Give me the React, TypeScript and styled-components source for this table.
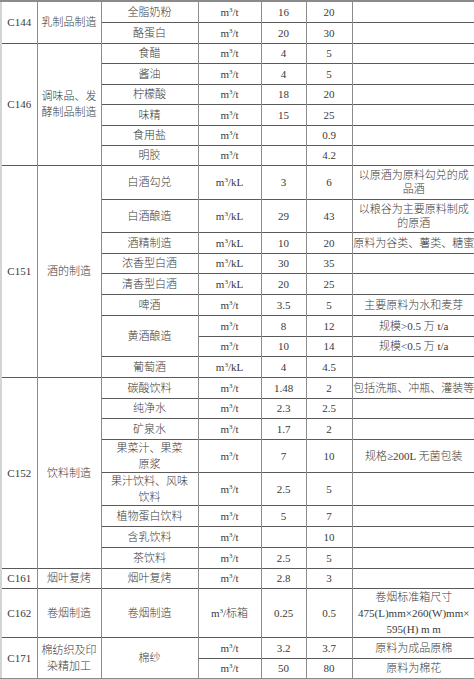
import React from 'react';
import styled, { createGlobalStyle } from 'styled-components';

const GlobalStyle = createGlobalStyle`
  html, body {
    margin: 0;
    padding: 0;
    background: #fff;
  }
  body {
    font-family: 'Liberation Serif', 'Noto Sans CJK SC', serif;
    font-weight: 300;
    color: #3a3a3a;
  }
`;

const Table = styled.table`
  width: 474px;
  table-layout: fixed;
  border-collapse: collapse;
  font-size: 11px;
  line-height: 16px;
  border-top: 2px solid #8a8a8a;
  border-bottom: 2px solid #8a8a8a;
  border-left: 2px solid #d4d4d4;
`;

const Row = styled.tr<{ $h: number; $group?: boolean }>`
  height: ${p => p.$h}px;
  ${p => (p.$group ? 'border-top: 1px solid #3a3a3a;' : '')}
`;

const Cell = styled.td<{ $tight?: boolean }>`
  padding: 0;
  text-align: center;
  vertical-align: middle;
  white-space: nowrap;
  border-top: 1px solid #5a5a5a;
  border-right: 1px solid #8c8c8c;
  line-height: ${p => (p.$tight ? '14px' : '16px')};
`;

const Note = styled(Cell)`
  border-right: none;
`;

const Sup = styled.sup`
  font-size: 7px;
  line-height: 0;
  vertical-align: 4px;
`;

const Unit: React.FC<{ per: string }> = ({ per }) => (
  <>
    m<Sup>3</Sup>/{per}
  </>
);

const widths = [36, 64, 97, 63, 45, 46, 123];

type Item = {
  h: number;
  name?: React.ReactNode;
  nameSpan?: number;
  per: string;
  a: string;
  b: string;
  note?: React.ReactNode;
  tight?: boolean;
};

type Group = {
  code: string;
  title: React.ReactNode;
  items: Item[];
};

const groups: Group[] = [
  {
    code: 'C144',
    title: '乳制品制造',
    items: [
      { h: 21, name: '全脂奶粉', per: 't', a: '16', b: '20' },
      { h: 21, name: '酪蛋白', per: 't', a: '20', b: '30' },
    ],
  },
  {
    code: 'C146',
    title: (
      <>
        调味品、发
        <br />
        酵制品制造
      </>
    ),
    items: [
      { h: 20, name: '食醋', per: 't', a: '4', b: '5' },
      { h: 21, name: '酱油', per: 't', a: '4', b: '5' },
      { h: 20, name: '柠檬酸', per: 't', a: '18', b: '20' },
      { h: 21, name: '味精', per: 't', a: '15', b: '25' },
      { h: 20, name: '食用盐', per: 't', a: '', b: '0.9' },
      { h: 20, name: '明胶', per: 't', a: '', b: '4.2' },
    ],
  },
  {
    code: 'C151',
    title: '酒的制造',
    items: [
      {
        h: 34,
        name: '白酒勾兑',
        per: 'kL',
        a: '3',
        b: '6',
        tight: true,
        note: (
          <>
            以原酒为原料勾兑的成
            <br />
            品酒
          </>
        ),
      },
      {
        h: 33,
        name: '白酒酿造',
        per: 'kL',
        a: '29',
        b: '43',
        tight: true,
        note: (
          <>
            以粮谷为主要原料制成
            <br />
            的原酒
          </>
        ),
      },
      { h: 21, name: '酒精制造', per: 'kL', a: '10', b: '20', note: '原料为谷类、薯类、糖蜜' },
      { h: 20, name: '浓香型白酒', per: 'kL', a: '30', b: '35' },
      { h: 21, name: '清香型白酒', per: 'kL', a: '20', b: '25' },
      { h: 21, name: '啤酒', per: 't', a: '3.5', b: '5', note: '主要原料为水和麦芽' },
      { h: 21, name: '黄酒酿造', nameSpan: 2, per: 't', a: '8', b: '12', note: '规模>0.5 万 t/a' },
      { h: 20, per: 't', a: '10', b: '14', note: '规模<0.5 万 t/a' },
      { h: 21, name: '葡萄酒', per: 'kL', a: '4', b: '4.5' },
    ],
  },
  {
    code: 'C152',
    title: '饮料制造',
    items: [
      { h: 21, name: '碳酸饮料', per: 't', a: '1.48', b: '2', note: '包括洗瓶、冲瓶、灌装等' },
      { h: 20, name: '纯净水', per: 't', a: '2.3', b: '2.5' },
      { h: 21, name: '矿泉水', per: 't', a: '1.7', b: '2' },
      {
        h: 33,
        name: (
          <>
            果菜汁、果菜
            <br />
            原浆
          </>
        ),
        per: 't',
        a: '7',
        b: '10',
        note: '规格≥200L 无菌包装',
      },
      {
        h: 33,
        name: (
          <>
            果汁饮料、风味
            <br />
            饮料
          </>
        ),
        per: 't',
        a: '2.5',
        b: '5',
      },
      { h: 21, name: '植物蛋白饮料', per: 't', a: '5', b: '7' },
      { h: 21, name: '含乳饮料', per: 't', a: '', b: '10' },
      { h: 21, name: '茶饮料', per: 't', a: '2.5', b: '5' },
    ],
  },
  {
    code: 'C161',
    title: '烟叶复烤',
    items: [{ h: 20, name: '烟叶复烤', per: 't', a: '2.8', b: '3' }],
  },
  {
    code: 'C162',
    title: '卷烟制造',
    items: [
      {
        h: 49,
        name: '卷烟制造',
        per: '标箱',
        a: '0.25',
        b: '0.5',
        note: (
          <>
            卷烟标准箱尺寸
            <br />
            475(L)mm×260(W)mm×
            <br />
            595(H) m m
          </>
        ),
      },
    ],
  },
  {
    code: 'C171',
    title: (
      <>
        棉纺织及印
        <br />
        染精加工
      </>
    ),
    items: [
      { h: 21, name: '棉纱', nameSpan: 2, per: 't', a: '3.2', b: '3.7', note: '原料为成品原棉' },
      { h: 21, per: 't', a: '50', b: '80', note: '原料为棉花' },
    ],
  },
];

export default function App() {
  return (
    <>
      <GlobalStyle />
      <Table>
        <colgroup>
          {widths.map((w, i) => (
            <col key={i} style={{ width: w }} />
          ))}
        </colgroup>
        <tbody>
          {groups.map(g =>
            g.items.map((it, i) => (
              <Row key={`${g.code}-${i}`} $h={it.h} $group={i === 0}>
                {i === 0 && (
                  <>
                    <Cell rowSpan={g.items.length}>{g.code}</Cell>
                    <Cell rowSpan={g.items.length}>{g.title}</Cell>
                  </>
                )}
                {it.name !== undefined && <Cell rowSpan={it.nameSpan ?? 1}>{it.name}</Cell>}
                <Cell>
                  <Unit per={it.per} />
                </Cell>
                <Cell>{it.a}</Cell>
                <Cell>{it.b}</Cell>
                <Note $tight={it.tight}>{it.note}</Note>
              </Row>
            ))
          )}
        </tbody>
      </Table>
    </>
  );
}
